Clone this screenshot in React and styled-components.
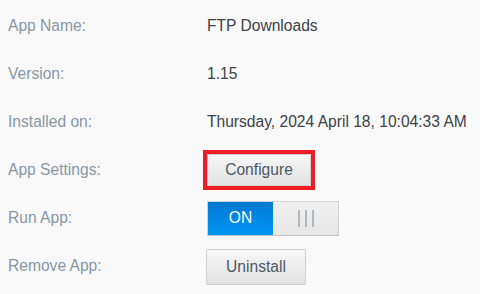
import React from "react";
import styled, { createGlobalStyle } from "styled-components";

const Global = createGlobalStyle`
  html, body { margin: 0; padding: 0; background: #f9f9f9; }
  body { font-family: Arial, "Liberation Sans", Helvetica, sans-serif; }
`;

const Page = styled.div`
  width: 480px;
  height: 294px;
  box-sizing: border-box;
  padding: 2px 0 0 8px;
  background: #f9f9f9;
  display: grid;
  grid-template-columns: 199px 1fr;
  grid-auto-rows: 48px;
  align-items: center;
  overflow: hidden;
`;

const Label = styled.div`
  font-size: 15.6px;
  color: #8797a6;
`;

const Value = styled.div`
  font-size: 15.6px;
  color: #3c4248;
  white-space: nowrap;
`;

const Button = styled.button`
  box-sizing: border-box;
  width: ${(p) => p.$w}px;
  height: ${(p) => p.$h}px;
  font-family: Arial, "Liberation Sans", sans-serif;
  font-size: 15.6px;
  color: #4d5864;
  background: linear-gradient(#f7f7f7, #e2e2e2);
  border: 1px solid #cfcfcf;
  border-radius: 1px;
  padding: 0;
  margin-left: ${(p) => p.$ml || 0}px;
  margin-top: ${(p) => p.$mt || 0}px;
  cursor: pointer;
`;

const Highlight = styled.div`
  display: inline-flex;
  border: 4px solid #ee1c25;
  margin-left: -4px;
`;

const Toggle = styled.div`
  display: flex;
  width: 132px;
  height: 35px;
  box-sizing: border-box;
  border: 1px solid #d2d2d2;
  border-bottom-color: #c4c4c4;
`;

const OnPart = styled.div`
  width: 65px;
  display: flex;
  align-items: center;
  justify-content: center;
  background: linear-gradient(#0079d2, #0096f4);
  color: #fff;
  font-size: 15.6px;
`;

const OffPart = styled.div`
  flex: 1;
  display: flex;
  align-items: center;
  justify-content: center;
  gap: 5px;
  background: linear-gradient(#f0f0f0, #e6e6e6);
`;

const Grip = styled.span`
  width: 2px;
  height: 17px;
  background: #b4b8bc;
`;

export default function App() {
  return (
    <>
      <Global />
      <Page>
        <Label>App Name:</Label>
        <Value>FTP Downloads</Value>
        <Label>Version:</Label>
        <Value>1.15</Value>
        <Label>Installed on:</Label>
        <Value>Thursday, 2024 April 18, 10:04:33 AM</Value>
        <Label>App Settings:</Label>
        <div>
          <Highlight>
            <Button $w={104} $h={32}>Configure</Button>
          </Highlight>
        </div>
        <Label>Run App:</Label>
        <div>
          <Toggle>
            <OnPart>ON</OnPart>
            <OffPart>
              <Grip />
              <Grip />
              <Grip />
            </OffPart>
          </Toggle>
        </div>
        <Label>Remove App:</Label>
        <div>
          <Button $w={100} $h={36} $ml={-1} $mt={2}>Uninstall</Button>
        </div>
      </Page>
    </>
  );
}
